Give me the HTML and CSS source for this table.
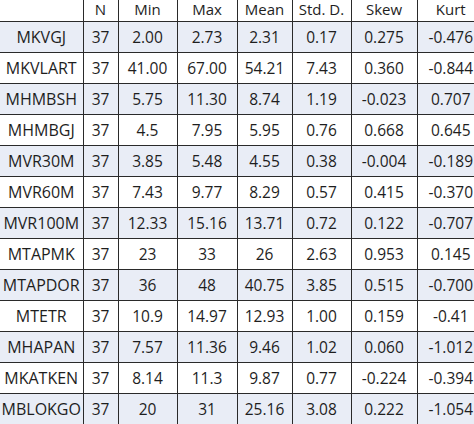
FILE: index.html
```html
<!DOCTYPE html>
<html>
<head>
<meta charset="utf-8">
<link rel="stylesheet" href="styles.css">
</head>
<body>
<table class="stats">
<colgroup>
<col class="c-name"><col class="c-n"><col class="c-min"><col class="c-max"><col class="c-mean"><col class="c-sd"><col class="c-skew"><col class="c-kurt">
</colgroup>
<thead>
<tr><th></th><th>N</th><th>Min</th><th>Max</th><th>Mean</th><th>Std. D.</th><th>Skew</th><th>Kurt</th></tr>
</thead>
<tbody>
<tr class="alt"><td>MKVGJ</td><td>37</td><td>2.00</td><td>2.73</td><td>2.31</td><td>0.17</td><td>0.275</td><td>-0.476</td></tr>
<tr><td>MKVLART</td><td>37</td><td>41.00</td><td>67.00</td><td>54.21</td><td>7.43</td><td>0.360</td><td>-0.844</td></tr>
<tr class="alt"><td>MHMBSH</td><td>37</td><td>5.75</td><td>11.30</td><td>8.74</td><td>1.19</td><td>-0.023</td><td>0.707</td></tr>
<tr><td>MHMBGJ</td><td>37</td><td>4.5</td><td>7.95</td><td>5.95</td><td>0.76</td><td>0.668</td><td>0.645</td></tr>
<tr class="alt"><td>MVR30M</td><td>37</td><td>3.85</td><td>5.48</td><td>4.55</td><td>0.38</td><td>-0.004</td><td>-0.189</td></tr>
<tr><td>MVR60M</td><td>37</td><td>7.43</td><td>9.77</td><td>8.29</td><td>0.57</td><td>0.415</td><td>-0.370</td></tr>
<tr class="alt"><td>MVR100M</td><td>37</td><td>12.33</td><td>15.16</td><td>13.71</td><td>0.72</td><td>0.122</td><td>-0.707</td></tr>
<tr><td>MTAPMK</td><td>37</td><td>23</td><td>33</td><td>26</td><td>2.63</td><td>0.953</td><td>0.145</td></tr>
<tr class="alt"><td>MTAPDOR</td><td>37</td><td>36</td><td>48</td><td>40.75</td><td>3.85</td><td>0.515</td><td>-0.700</td></tr>
<tr><td>MTETR</td><td>37</td><td>10.9</td><td>14.97</td><td>12.93</td><td>1.00</td><td>0.159</td><td>-0.41</td></tr>
<tr class="alt"><td>MHAPAN</td><td>37</td><td>7.57</td><td>11.36</td><td>9.46</td><td>1.02</td><td>0.060</td><td>-1.012</td></tr>
<tr><td>MKATKEN</td><td>37</td><td>8.14</td><td>11.3</td><td>9.87</td><td>0.77</td><td>-0.224</td><td>-0.394</td></tr>
<tr class="alt"><td>MBLOKGO</td><td>37</td><td>20</td><td>31</td><td>25.16</td><td>3.08</td><td>0.222</td><td>-1.054</td></tr>
</tbody>
</table>
</body>
</html>
```
FILE: styles.css
```css
html, body {
  margin: 0;
  padding: 0;
  background: #ffffff;
  overflow: hidden;
}
body {
  width: 474px;
  height: 424px;
}
.stats {
  border-collapse: collapse;
  table-layout: fixed;
  width: 484px;
  font-family: "Open Sans", "Noto Sans", sans-serif;
  font-size: 15.5px;
  color: #1e1e1e;
}
.c-name { width: 83px; }
.c-n { width: 35px; }
.c-min { width: 59px; }
.c-max { width: 60px; }
.c-mean { width: 55px; }
.c-sd { width: 59px; }
.c-skew { width: 66px; }
.c-kurt { width: 67px; }
.stats th, .stats td {
  padding: 0;
  text-align: center;
  white-space: nowrap;
  border-left: 1px solid #2a2a2a;
  border-bottom: 1px solid #2a2a2a;
}
.stats td {
  overflow: hidden;
}
.stats th:first-child, .stats td:first-child {
  border-left: none;
}
.stats td:first-child {
  font-size: 16px;
}
.stats th {
  font-weight: normal;
  font-size: 15px;
  height: 21px;
  line-height: 19px;
  vertical-align: top;
}
.stats td {
  height: 30px;
  line-height: 30px;
}
.stats tr.alt td {
  background: #e9edf6;
}
```
